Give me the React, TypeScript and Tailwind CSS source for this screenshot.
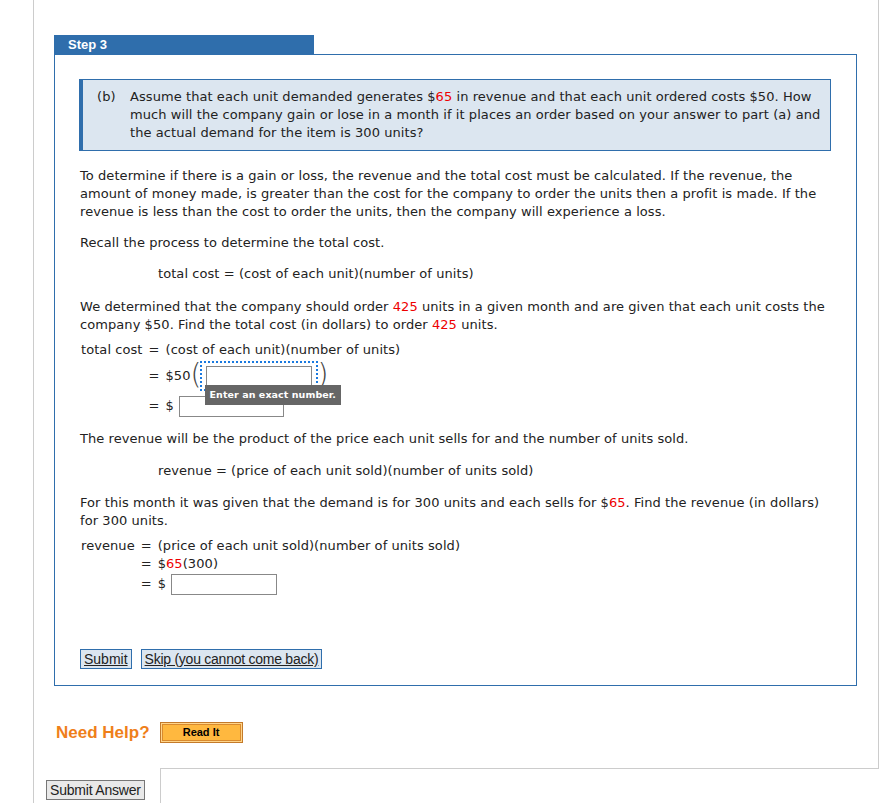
import React from "react";

const V = { fontFamily: "Verdana, 'DejaVu Sans', sans-serif" };
const A = { fontFamily: "Arial, 'Liberation Sans', sans-serif" };

function Red({ children }: { children: React.ReactNode }) {
  return <span className="text-[#ee0000]">{children}</span>;
}

export default function App() {
  return (
    <div className="h-[803px] bg-white overflow-hidden">
      <div className="ml-[33px] w-[846px] border-l border-[#cccccc]">
        <div className="border-r border-[#cccccc] pt-[35px] pb-[22px]">
          <div className="ml-[20px] mr-[21px]">
            <div
              className="w-[260px] h-[19px] bg-[#2f6eac] text-white text-[13px] font-bold leading-[19px] pl-[14px]"
              style={A}
            >
              Step 3
            </div>
            <div
              className="border border-[#2f6eac] px-[25px] pt-[24px] pb-[16px] text-[13px] leading-[18px] tracking-[0.07px] text-[#222222]"
              style={V}
            >
              <div className="ml-[-1px] border border-[#2f6eac] border-l-[4px] bg-[#dce6f0] py-[8px] pl-[14px] pr-[8px] flex">
                <div className="w-[33px] shrink-0">(b)</div>
                <div>
                  Assume that each unit demanded generates $<Red>65</Red> in revenue and that each unit ordered costs $50. How much will the company gain or lose in a month if it places an order based on your answer to part (a) and the actual demand for the item is 300 units?
                </div>
              </div>

              <p className="mt-[16px]">
                To determine if there is a gain or loss, the revenue and the total cost must be calculated. If the revenue, the amount of money made, is greater than the cost for the company to order the units then a profit is made. If the revenue is less than the cost to order the units, then the company will experience a loss.
              </p>
              <p className="mt-[13px]">Recall the process to determine the total cost.</p>
              <p className="mt-[13px] pl-[78px]">total cost = (cost of each unit)(number of units)</p>
              <p className="mt-[15px]">
                We determined that the company should order <Red>425</Red> units in a given month and are given that each unit costs the company $50. Find the total cost (in dollars) to order <Red>425</Red> units.
              </p>

              <div className="mt-[7px] grid grid-cols-[auto_auto_1fr] items-center">
                <div className="pl-[1px] h-[18px]">total cost</div>
                <div className="px-[6px] h-[18px]">=</div>
                <div className="h-[18px]">(cost of each unit)(number of units)</div>

                <div></div>
                <div className="px-[6px]">=</div>
                <div className="flex items-center h-[34px]">
                  <span>$50</span>
                  <span className="text-[28px] leading-[28px] font-light text-[#444] mt-[-3px]" style={{ fontFamily: "'DejaVu Sans', sans-serif" }}>(</span>
                  <span className="relative border-2 border-dotted border-[#1a7ae0] px-[4px] py-[3px] ml-[-2px]">
                    <span className="block w-[106px] h-[20px] border border-[#888888] bg-white"></span>
                    <span
                      className="absolute left-[3px] top-[22px] z-10 whitespace-nowrap bg-[#666666] text-white text-[9.5px] font-bold leading-[20px] px-[5px] h-[20px]"
                      style={V}
                    >
                      Enter an exact number.
                    </span>
                  </span>
                  <span className="text-[28px] leading-[28px] font-light text-[#444] mt-[-3px]" style={{ fontFamily: "'DejaVu Sans', sans-serif" }}>)</span>
                </div>

                <div></div>
                <div className="px-[6px] mt-[1px]">=</div>
                <div className="flex items-center h-[24px] mt-[1px]">
                  <span>$</span>
                  <span className="block ml-[5px] w-[105px] h-[21px] border border-[#888888] bg-white"></span>
                </div>
              </div>

              <p className="mt-[12px]">The revenue will be the product of the price each unit sells for and the number of units sold.</p>
              <p className="mt-[14px] pl-[78px]">revenue = (price of each unit sold)(number of units sold)</p>
              <p className="mt-[14px]">
                For this month it was given that the demand is for 300 units and each sells for $<Red>65</Red>. Find the revenue (in dollars) for 300 units.
              </p>

              <div className="mt-[7px] grid grid-cols-[auto_auto_1fr] items-center">
                <div className="pl-[1px] h-[18px]">revenue</div>
                <div className="px-[6px] h-[18px]">=</div>
                <div className="h-[18px]">(price of each unit sold)(number of units sold)</div>

                <div></div>
                <div className="px-[6px] h-[18px]">=</div>
                <div className="h-[18px]">$<Red>65</Red>(300)</div>

                <div></div>
                <div className="px-[6px]">=</div>
                <div className="flex items-center h-[22px]">
                  <span>$</span>
                  <span className="block ml-[5px] w-[106px] h-[21px] border border-[#888888] bg-white"></span>
                </div>
              </div>

              <div className="mt-[54px] flex gap-[9px]" style={A}>
                <span className="border border-[#2f6eac] bg-[#dce6f0] px-[3px] h-[20px] leading-[18px] text-[14px] tracking-normal underline text-[#222222]">
                  Submit
                </span>
                <span className="border border-[#2f6eac] bg-[#dce6f0] px-[3px] h-[20px] leading-[18px] text-[14px] tracking-[-0.25px] underline text-[#222222]">
                  Skip (you cannot come back)
                </span>
              </div>
            </div>
          </div>

          <div className="mt-[34px] ml-[22px] flex items-center gap-[10px]" style={A}>
            <span className="text-[#ef7f1a] text-[17px] font-bold">Need Help?</span>
            <span className="border border-[#c47a2a] p-[1px] bg-[#ffd58a]">
              <span className="block w-[79px] h-[17px] border border-[#d98a2e] bg-[#ffb83f] text-center text-[11px] font-bold leading-[15px] text-black">
                Read It
              </span>
            </span>
          </div>
        </div>

        <div className="flex">
          <div className="w-[126px] shrink-0 pt-[9px] pl-[12px] h-[35px]">
            <span
              className="inline-block px-[3px] h-[20px] border border-[#777777] bg-[#e9e9e9] text-[14px] leading-[18px] tracking-[-0.2px] text-center text-[#222222]"
              style={A}
            >
              Submit Answer
            </span>
          </div>
          <div className="flex-1 border-t border-l border-[#cccccc] h-[35px]"></div>
        </div>
      </div>
    </div>
  );
}
